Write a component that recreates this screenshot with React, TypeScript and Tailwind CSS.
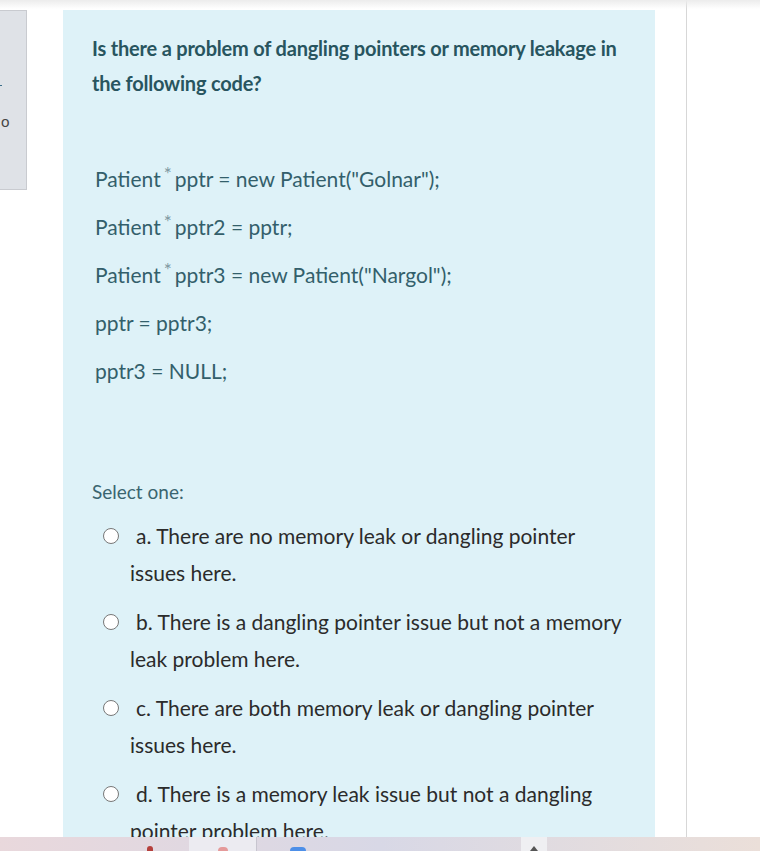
const options = [
  ["a. There are no memory leak or dangling pointer", "issues here."],
  ["b. There is a dangling pointer issue but not a memory", "leak problem here."],
  ["c. There are both memory leak or dangling pointer", "issues here."],
  ["d. There is a memory leak issue but not a dangling", "pointer problem here."],
];

const code = [
  'Patient* pptr = new Patient("Golnar");',
  "Patient* pptr2 = pptr;",
  'Patient* pptr3 = new Patient("Nargol");',
  "pptr = pptr3;",
  "pptr3 = NULL;",
];

function CodeLine({ text }: { text: string }) {
  const parts = text.split("*");
  return (
    <p className="h-[48px] leading-[48px]">
      {parts[0]}
      {parts.length > 1 && (
        <>
          <span className="relative top-[-6px] mx-[3px] text-[19px] leading-none text-[#7d979f]">*</span>
          {parts[1].trimStart()}
        </>
      )}
    </p>
  );
}

export default function App() {
  return (
    <div
      className="relative h-[851px] w-[760px] overflow-hidden bg-white flex flex-col"
      style={{ fontFamily: "Lato, 'Noto Sans', sans-serif" }}
    >
      {/* top shadow */}
      <div className="absolute inset-x-0 top-0 h-[9px] bg-gradient-to-b from-[#ececec] to-white/0 z-10" />

      <div className="flex flex-1 min-h-0">
        {/* left drawer stub */}
        <div className="mt-[10px] h-[180px] w-[27px] shrink-0 border-y border-r border-[#c9cbd0] bg-[#dfe2e7] text-[#444] relative">
          <div className="absolute left-0 top-[74px] h-[1px] w-[2px] bg-[#3b6e8a]" />
          <span className="absolute left-[1px] top-[100px] text-[15px] leading-[20px]">o</span>
        </div>

        {/* question card */}
        <div className="ml-[36px] mt-[10px] w-[592px] shrink-0 bg-[#def2f8] pl-[29px] pr-[20px] pt-[21px]">
          <h2 className="text-[20px] font-bold leading-[35px] tracking-[-0.2px] text-[#28555f]">
            Is there a problem of dangling pointers or memory leakage in the following code?
          </h2>

          <div className="mt-[54px] pl-[3px] text-[21px] text-[#335f6b]">
            {code.map((c) => (
              <CodeLine key={c} text={c} />
            ))}
          </div>

          <p className="mt-[82px] text-[19px] leading-[30px] text-[#3a6570]">Select one:</p>

          <div className="mt-[10px] pl-[11px] text-[21px] text-[#2b2b2b]">
            {options.map(([l1, l2]) => (
              <div key={l1} className="mb-[12px] leading-[37px]">
                <div className="flex items-center">
                  <span className="h-[16px] w-[16px] rounded-full border-[1.5px] border-[#777] bg-white shrink-0" />
                  <span className="ml-[17px]">{l1}</span>
                </div>
                <div className="pl-[27px]">{l2}</div>
              </div>
            ))}
          </div>
        </div>

        {/* right divider */}
        <div className="ml-[31px] w-px bg-[#d7d7d7]" />
      </div>

      {/* taskbar strip */}
      <div className="h-[14px] shrink-0 flex bg-gradient-to-r from-[#e9d8dc] via-[#d8d8e6] to-[#ebdfd9]">
        <div className="w-[147px]" />
        <div className="mt-[9px] h-[5px] w-[6px] rounded-t-full bg-[#b5403c]" />
        <div className="w-[36px]" />
        <div className="w-[67px] bg-[#ecebf1] flex justify-center">
          <div className="mt-[10px] h-[4px] w-[10px] rounded-t-full bg-[#e59a9a]" />
        </div>
        <div className="w-px bg-[#c7c5cf]" />
        <div className="w-[33px]" />
        <div className="mt-[10px] h-[4px] w-[16px] rounded-t bg-[#4d8fe8]" />
        <div className="w-[215px]" />
        <div className="w-[26px] bg-[#efeff2] flex justify-center">
          <div className="mt-[9px] h-0 w-0 border-x-[4px] border-b-[5px] border-x-transparent border-b-[#555]" />
        </div>
      </div>
    </div>
  );
}
